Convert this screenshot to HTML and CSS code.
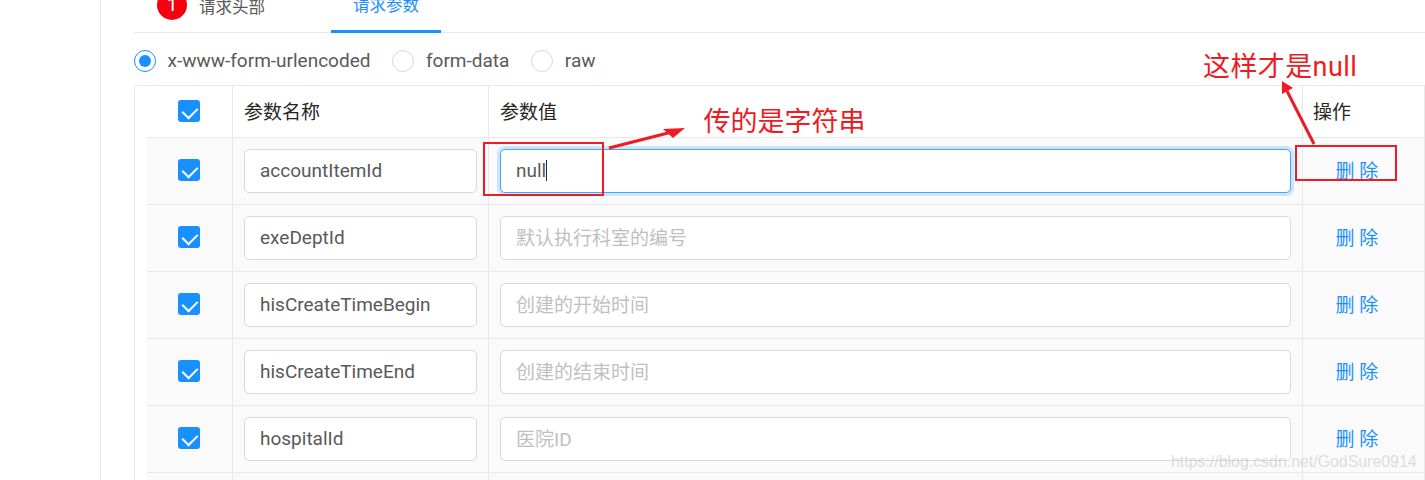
FILE: index.html
```html
<!DOCTYPE html>
<html lang="zh-CN">
<head>
    <meta charset="UTF-8">
    <title>请求参数</title>
    <link rel="stylesheet" href="styles.css">
</head>
<body>
    <div class="content">
        <div class="tabs">
            <div class="tab">
                <span class="badge">1</span>
                <span>请求头部</span>
            </div>
            <div class="tab active">请求参数</div>
        </div>

        <div class="radios">
            <label class="radio checked"><i></i>x-www-form-urlencoded</label>
            <label class="radio"><i></i>form-data</label>
            <label class="radio"><i></i>raw</label>
        </div>

        <div class="table">
            <div class="row head">
                <div class="cell check"><span class="checkbox"></span></div>
                <div class="cell">参数名称</div>
                <div class="cell">参数值</div>
                <div class="cell">操作</div>
            </div>
            <div class="row">
                <div class="cell check"><span class="checkbox"></span></div>
                <div class="cell"><div class="input">accountItemId</div></div>
                <div class="cell"><div class="input focus">null<span class="caret"></span></div></div>
                <div class="cell action">删 除</div>
            </div>
            <div class="row">
                <div class="cell check"><span class="checkbox"></span></div>
                <div class="cell"><div class="input">exeDeptId</div></div>
                <div class="cell"><div class="input holder">默认执行科室的编号</div></div>
                <div class="cell action">删 除</div>
            </div>
            <div class="row">
                <div class="cell check"><span class="checkbox"></span></div>
                <div class="cell"><div class="input">hisCreateTimeBegin</div></div>
                <div class="cell"><div class="input holder">创建的开始时间</div></div>
                <div class="cell action">删 除</div>
            </div>
            <div class="row">
                <div class="cell check"><span class="checkbox"></span></div>
                <div class="cell"><div class="input">hisCreateTimeEnd</div></div>
                <div class="cell"><div class="input holder">创建的结束时间</div></div>
                <div class="cell action">删 除</div>
            </div>
            <div class="row">
                <div class="cell check"><span class="checkbox"></span></div>
                <div class="cell"><div class="input">hospitalId</div></div>
                <div class="cell"><div class="input holder">医院ID</div></div>
                <div class="cell action">删 除</div>
            </div>
            <div class="row">
                <div class="cell check"></div>
                <div class="cell"></div>
                <div class="cell"></div>
                <div class="cell"></div>
            </div>
        </div>
    </div>

    <!-- 截图上的红色标注 -->
    <div class="mark-box box-value"></div>
    <div class="mark-box box-action"></div>
    <div class="mark-text text-string">传的是字符串</div>
    <div class="mark-text text-null">这样才是null</div>
    <svg class="arrows" width="1425" height="480" viewBox="0 0 1425 480">
        <path d="M609 148 L672 132" stroke="#ed1c24" stroke-width="3" fill="none"/>
        <path d="M685 128 L663 129 L673 138 Z" fill="#ed1c24"/>
        <path d="M1314 144 L1287 91" stroke="#ed1c24" stroke-width="3" fill="none"/>
        <path d="M1282 81 L1282 94 L1293 88 Z" fill="#ed1c24"/>
    </svg>
    <div class="watermark">https://blog.csdn.net/GodSure0914</div>
</body>
</html>
```

FILE: styles.css
```css
* {
    box-sizing: border-box;
    margin: 0;
    padding: 0;
}

html, body {
    height: 480px;
    overflow: hidden;
    background: #fff;
}

body {
    position: relative;
    font-family: Roboto, "Noto Sans CJK SC", sans-serif;
    font-size: 19px;
    color: #595959;
}

.content {
    margin-left: 100px;
    height: 480px;
    padding-left: 33px;
    border-left: 1px solid #e8e8e8;
    overflow: hidden;
}

/* 顶部标签 */
.tabs {
    display: flex;
    height: 53px;
    margin-top: -20px;
    border-bottom: 1px solid #e8e8e8;
    font-size: 16.5px;
}

.tab {
    display: flex;
    align-items: center;
    gap: 12px;
    height: 53px;
    padding-left: 23px;
    width: 197px;
    color: #595959;
}

.tab span:last-child {
    margin-top: -2px;
}

.tab.active {
    width: 110px;
    padding-left: 22px;
    padding-bottom: 2px;
    color: #1890ff;
    border-bottom: 3px solid #1890ff;
}

.badge {
    display: block;
    width: 30px;
    height: 30px;
    line-height: 30px;
    margin-top: -3px;
    border-radius: 50%;
    background: #f5000f;
    color: #fff;
    text-align: center;
    font-size: 19px;
}

/* 单选 */
.radios {
    display: flex;
    height: 52px;
    padding-top: 17px;
    gap: 22px;
}

.radio {
    display: flex;
    align-items: center;
    gap: 11.5px;
    height: 22px;
    padding-bottom: 1px;
}

.radio i {
    display: block;
    position: relative;
    width: 22px;
    height: 22px;
    border: 1px solid #d9d9d9;
    border-radius: 50%;
}

.radio.checked i {
    border-color: #1890ff;
}

.radio.checked i::after {
    content: '';
    position: absolute;
    top: 4px;
    left: 4px;
    width: 12px;
    height: 12px;
    border-radius: 50%;
    background: #1890ff;
}

/* 表格 */
.table {
    border: 1px solid #e8e8e8;
    border-bottom: 0;
    border-radius: 5px 0 0 0;
    padding-left: 12px;
}

.row {
    display: grid;
    grid-template-columns: 86px 256px 814px 1fr;
    height: 67px;
    background: #fafafa;
    border-bottom: 1px solid #e8e8e8;
}

.row.head {
    height: 52px;
    background: #fff;
    color: #262626;
}

.cell {
    display: flex;
    align-items: center;
    padding: 0 11px;
    border-right: 1px solid #e8e8e8;
}

.head .cell {
    padding-bottom: 2px;
}

.head .cell:last-child {
    padding-left: 10px;
}

.cell:last-child {
    border-right: 0;
}

.row .cell.check {
    justify-content: center;
    padding: 0 1px 2px 0;
}

.cell.action {
    padding-left: 32.5px;
    padding-bottom: 3px;
    color: #1890ff;
}

.checkbox {
    display: block;
    position: relative;
    width: 22px;
    height: 22px;
    border-radius: 3px;
    background: #1890ff;
}

.checkbox::after {
    content: '';
    position: absolute;
    top: 4px;
    left: 7px;
    width: 8px;
    height: 12px;
    border: solid #fff;
    border-width: 0 2px 2px 0;
    transform: rotate(45deg);
}

.input {
    display: flex;
    align-items: center;
    width: 100%;
    height: 44px;
    padding: 0 15px 2px;
    background: #fff;
    border: 1px solid #d9d9d9;
    border-radius: 5px;
}

.input.holder {
    color: #bfbfbf;
    padding-bottom: 3px;
}

.input.focus {
    border-color: #40a9ff;
    box-shadow: 0 0 0 3px rgba(24, 144, 255, 0.2);
}

.caret {
    display: block;
    width: 1px;
    height: 21px;
    background: #262626;
}

/* 标注 */
.mark-box {
    position: absolute;
    border: 2px solid #ed1c24;
}

.box-value {
    left: 483px;
    top: 142px;
    width: 121px;
    height: 54px;
}

.box-action {
    left: 1295px;
    top: 145px;
    width: 102px;
    height: 36px;
}

.mark-text {
    position: absolute;
    color: #ed1c24;
    font-size: 27px;
    line-height: 36px;
    white-space: nowrap;
}

.text-string {
    left: 703.5px;
    top: 104px;
}

.text-null {
    left: 1203px;
    top: 49px;
    letter-spacing: 0.4px;
}

.arrows {
    position: absolute;
    left: 0;
    top: 0;
}

.watermark {
    position: absolute;
    left: 1171px;
    top: 450px;
    font-family: "Liberation Sans", sans-serif;
    font-size: 15.9px;
    line-height: 24px;
    color: rgba(190, 190, 190, 0.5);
    white-space: nowrap;
}
```
